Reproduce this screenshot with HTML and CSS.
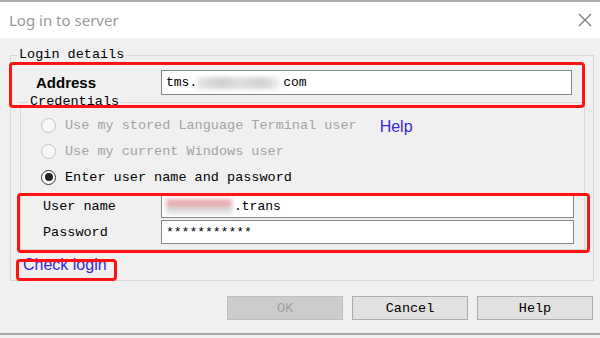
FILE: index.html
```html
<!DOCTYPE html>
<html lang="en">
<head>
    <meta charset="UTF-8" />
    <title>Log in to server</title>
    <link rel="stylesheet" href="styles.css">
</head>
<body>
    <div class="topline"></div>
    <div class="titlebar">
        <span class="title">Log in to server</span>
        <svg class="close" width="14" height="14" viewBox="0 0 14 14">
            <path d="M1 1 L13 13 M13 1 L1 13" stroke="#7a7a7a" stroke-width="1.2" fill="none" />
        </svg>
    </div>

    <div class="main">
        <fieldset class="group outer">
            <legend>Login details</legend>

            <div class="address-row">
                <label class="address-label" for="address">Address</label>
                <div class="field address-field">
                    <span>tms.</span><span class="smudge gray-smudge"></span><span>com</span>
                </div>
            </div>

            <fieldset class="group inner">
                <legend>Credentials</legend>
                <div class="radio-row disabled">
                    <span class="radio"></span>
                    <span>Use my stored Language Terminal user</span>
                    <a class="link help-link">Help</a>
                </div>
                <div class="radio-row disabled">
                    <span class="radio"></span>
                    <span>Use my current Windows user</span>
                </div>
                <div class="radio-row">
                    <span class="radio checked"></span>
                    <span>Enter user name and password</span>
                </div>

                <div class="input-row first">
                    <span class="input-label">User name</span>
                    <div class="field">
                        <span class="smudge pink-smudge"></span><span>.trans</span>
                    </div>
                </div>
                <div class="input-row">
                    <span class="input-label">Password</span>
                    <div class="field"><span>***********</span></div>
                </div>
            </fieldset>

            <div class="check-row">
                <a class="link check-link">Check login</a>
            </div>
        </fieldset>

        <div class="buttons">
            <button class="btn" disabled>OK</button>
            <button class="btn">Cancel</button>
            <button class="btn">Help</button>
        </div>
    </div>
    <div class="bottomline"></div>

    <!-- red annotation frames -->
    <div class="mark mark-address"></div>
    <div class="mark mark-creds"></div>
    <div class="mark mark-check"></div>
</body>
</html>
```

FILE: styles.css
```css
html, body {
    margin: 0;
    padding: 0;
}
body {
    width: 600px;
    height: 338px;
    overflow: hidden;
    position: relative;
    background-color: #f0f0f0;
    font-family: "Liberation Mono", "DejaVu Sans Mono", monospace;
    font-size: 13.5px;
    color: #000;
}
.topline {
    height: 2px;
    background-color: #aaaaaa;
}
.titlebar {
    height: 36px;
    background-color: #fff;
    display: flex;
    align-items: center;
    justify-content: space-between;
    padding: 0 8px 0 9px;
}
.title {
    font-family: "Noto Sans", sans-serif;
    font-size: 15px;
    color: #9a9a9a;
}
.close {
    margin-top: -1px;
}
.main {
    padding: 10px 6px 0 10px;
}
.group {
    margin: 0;
    border: 1px solid #d7d7d7;
    padding: 0;
    min-width: 0;
}
.group legend {
    margin-left: 7px;
    padding: 0 2px;
    line-height: 14px;
    height: 14px;
}
.outer {
    padding: 0 8px 0 9px;
}
.outer > legend {
    margin-left: -3px;
}
.address-row {
    display: flex;
    align-items: center;
    height: 25px;
    margin-top: 8px;
    padding-left: 16px;
}
.address-label {
    width: 125px;
    font-family: "Liberation Sans", Arial, sans-serif;
    font-weight: bold;
    font-size: 15px;
}
.field {
    flex: 1;
    height: 100%;
    box-sizing: border-box;
    background-color: #fff;
    border: 1px solid #868686;
    display: flex;
    align-items: center;
    padding-left: 4px;
    font-size: 13px;
    white-space: pre;
}
.address-field {
    margin-right: 13px;
}
.smudge {
    display: inline-block;
    height: 12px;
    filter: blur(2px);
}
.gray-smudge {
    width: 82px;
    margin-right: 4px;
    background: linear-gradient(90deg, #e6e6e6 0%, #cfcfcf 30%, #dedede 50%, #d2d2d2 80%, #ececec 100%);
}
.pink-smudge {
    width: 66px;
    height: 15px;
    margin-right: 2px;
    background: linear-gradient(180deg, #eab0b5 0%, #e9a8ae 45%, #d9d9d9 55%, #e4e4e4 100%);
}
.inner {
    padding: 3px 10px 5px 0;
}
.radio-row {
    display: flex;
    align-items: center;
    height: 26px;
    padding-left: 20px;
}
.radio-row.disabled {
    color: #a3a3a3;
}
.radio {
    width: 15px;
    height: 15px;
    box-sizing: border-box;
    border: 1px solid #c2c2c2;
    border-radius: 50%;
    background-color: #f7f7f7;
    margin-right: 9px;
    display: flex;
    align-items: center;
    justify-content: center;
}
.radio.checked {
    border-color: #333;
    background-color: #fff;
}
.radio.checked::after {
    content: "";
    width: 8px;
    height: 8px;
    border-radius: 50%;
    background-color: #222;
}
.link {
    font-family: "Liberation Sans", Arial, sans-serif;
    font-size: 16px;
    color: #3a26d8;
}
.help-link {
    margin-left: 23px;
    margin-top: 3px;
}
.input-row {
    display: flex;
    align-items: center;
    height: 24px;
    margin-top: 2px;
    padding-left: 22px;
}
.input-row.first {
    margin-top: 4px;
}
.input-label {
    width: 118px;
}
.check-row {
    height: 30px;
    display: flex;
    align-items: center;
    padding-left: 3px;
}
.buttons {
    display: flex;
    justify-content: flex-end;
    gap: 9px;
    margin-top: 15px;
    padding-right: 1px;
}
.btn {
    width: 116px;
    height: 24px;
    background-color: #e1e1e1;
    border: 1px solid #adadad;
    font-family: "Liberation Mono", "DejaVu Sans Mono", monospace;
    font-size: 13.5px;
    color: #000;
    padding: 0;
}
.btn:disabled {
    background-color: #cccccc;
    border-color: #bfbfbf;
    color: #a0a0a0;
}
.bottomline {
    margin-top: 13px;
    height: 2px;
    background-color: #a5a5a5;
}
.mark {
    position: absolute;
    box-sizing: border-box;
    border: 3px solid #ff1212;
    border-radius: 4px;
}
.mark-address {
    left: 9px;
    top: 62px;
    width: 576px;
    height: 46px;
}
.mark-creds {
    left: 17px;
    top: 193px;
    width: 573px;
    height: 60px;
}
.mark-check {
    left: 16px;
    top: 259px;
    width: 101px;
    height: 22px;
}
```
